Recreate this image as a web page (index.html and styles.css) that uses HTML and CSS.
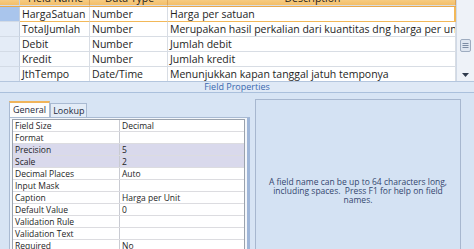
FILE: index.html
```html
<!DOCTYPE html>
<html lang="en">
<head>
  <meta charset="UTF-8" />
  <title>Table Design</title>
  <link rel="stylesheet" href="styles.css">
</head>
<body>

  <!-- Field grid -->
  <div class="design">
    <div class="fields">
      <div class="row head">
        <div class="sel"></div>
        <div class="cell c-name">Field Name</div>
        <div class="cell c-type">Data Type</div>
        <div class="cell c-desc">Description</div>
      </div>
      <div class="row current">
        <div class="sel"></div>
        <div class="cell c-name">HargaSatuan</div>
        <div class="cell c-type">Number</div>
        <div class="cell c-desc">Harga per satuan</div>
      </div>
      <div class="row">
        <div class="sel"></div>
        <div class="cell c-name">TotalJumlah</div>
        <div class="cell c-type">Number</div>
        <div class="cell c-desc">Merupakan hasil perkalian dari kuantitas dng harga per unit</div>
      </div>
      <div class="row">
        <div class="sel"></div>
        <div class="cell c-name">Debit</div>
        <div class="cell c-type">Number</div>
        <div class="cell c-desc">Jumlah debit</div>
      </div>
      <div class="row">
        <div class="sel"></div>
        <div class="cell c-name">Kredit</div>
        <div class="cell c-type">Number</div>
        <div class="cell c-desc">Jumlah kredit</div>
      </div>
      <div class="row">
        <div class="sel"></div>
        <div class="cell c-name">JthTempo</div>
        <div class="cell c-type">Date/Time</div>
        <div class="cell c-desc">Menunjukkan kapan tanggal jatuh temponya</div>
      </div>
    </div>
    <div class="vscroll">
      <div class="thumb">
        <svg width="9" height="7" viewBox="0 0 9 7"><path d="M1.5 1.5h6M1.5 3.5h6M1.5 5.5h6" stroke="#7d8ca3" stroke-width="1"/></svg>
      </div>
      <div class="arrow">
        <svg width="7" height="4" viewBox="0 0 7 4"><path d="M0 0h7L3.5 4z" fill="#2f3a4d"/></svg>
      </div>
    </div>
  </div>

  <div class="band">Field Properties</div>

  <!-- Field properties -->
  <div class="props">
    <div class="pane">
      <div class="tabs">
        <div class="tab active">General</div>
        <div class="tab">Lookup</div>
      </div>
      <div class="page">
        <div class="plist">
          <div class="prow"><span>Field Size</span><span>Decimal</span></div>
          <div class="prow"><span>Format</span><span></span></div>
          <div class="prow hl"><span>Precision</span><span>5</span></div>
          <div class="prow hl"><span>Scale</span><span>2</span></div>
          <div class="prow"><span>Decimal Places</span><span>Auto</span></div>
          <div class="prow"><span>Input Mask</span><span></span></div>
          <div class="prow"><span>Caption</span><span>Harga per Unit</span></div>
          <div class="prow"><span>Default Value</span><span>0</span></div>
          <div class="prow"><span>Validation Rule</span><span></span></div>
          <div class="prow"><span>Validation Text</span><span></span></div>
          <div class="prow"><span>Required</span><span>No</span></div>
        </div>
      </div>
    </div>
    <div class="help">
      A field name can be up to 64 characters long, including spaces.&nbsp; Press F1 for help on field names.
    </div>
  </div>

</body>
</html>
```

FILE: styles.css
```css
html, body {
  margin: 0;
  padding: 0;
  height: 100%;
  overflow: hidden;
  font-family: 'Open Sans', 'Noto Sans', sans-serif;
  color: #1e1e1e;
  background: #d7e4f4;
}

/* top grid */
.design {
  display: flex;
  height: 81px;
  background: #fff;
  overflow: hidden;
}

.fields {
  width: 456px;
  overflow: hidden;
}

.row {
  display: grid;
  grid-template-columns: 20px 70px 78px 1fr;
  height: 15px;
}

.row.head {
  margin-top: -9px;
  background: linear-gradient(#fbe2b0, #f3bc63);
  border-bottom: 1px solid #e9a84a;
}

.row.head .cell {
  text-align: center;
  border-right-color: #dba459;
}

.sel {
  background: #e4ecf7;
  border-right: 1px solid #c5d0df;
  border-bottom: 1px solid #d3dbe6;
}

.row.head .sel {
  background: transparent;
}

.row.current .sel {
  background: #a9c5ec;
}

.cell {
  font-size: 10.5px;
  line-height: 15px;
  padding-left: 2px;
  white-space: nowrap;
  overflow: hidden;
  border-right: 1px solid #d8dde4;
  border-bottom: 1px solid #d8dde4;
  box-sizing: border-box;
}

.row.current .cell {
  border-bottom: 1px solid #f2b859;
}

.row.current .c-desc {
  border-right: 2px solid #f2b859;
}

.vscroll {
  width: 18px;
  background: #eef2f8;
  border-left: 1px solid #d0d9e6;
  display: flex;
  flex-direction: column;
  align-items: center;
  padding-top: 39px;
  box-sizing: border-box;
}

.thumb {
  width: 11px;
  height: 13px;
  background: #dfe6f0;
  border: 1px solid #9eacc0;
  border-radius: 2px;
  box-sizing: border-box;
  display: flex;
  align-items: center;
  justify-content: center;
}

.arrow {
  margin-top: 19px;
  line-height: 0;
}

/* properties band */
.band {
  height: 10px;
  border-top: 1px solid #b4c6de;
  border-bottom: 1px solid #aac0dc;
  background: #dfe9f6;
  font-size: 9px;
  line-height: 10px;
  color: #3a68ae;
  text-align: center;
}

.props {
  display: flex;
  padding: 6px 13px 0 9px;
  gap: 5px;
}

.pane {
  width: 241px;
  padding-top: 2px;
}

.tabs {
  display: flex;
  align-items: flex-end;
  height: 16px;
}

.tab {
  font-size: 9px;
  line-height: 13px;
  padding: 0 2px;
  border: 1px solid #a9bad2;
  border-bottom: none;
  background: #e3ecf7;
  color: #1f2a3c;
}

.tab.active {
  height: 16px;
  line-height: 14px;
  padding: 0 3px;
  background: #fdfdfd;
  border-top: 2px solid #f0b45a;
  box-sizing: border-box;
}

.page {
  background: #f4f7fb;
  border: 1px solid #a9bad2;
  border-right: 3px solid #9fb6d8;
  padding: 1px 2px 0 2px;
  height: 140px;
}

.plist {
  background: #fff;
  border: 1px solid #9aa2ad;
}

.prow {
  display: grid;
  grid-template-columns: 107px 1fr;
  height: 12px;
  font-size: 8.5px;
  line-height: 12px;
  border-bottom: 1px solid #dcdce0;
  box-sizing: border-box;
}

.prow span {
  padding-left: 2px;
  white-space: nowrap;
  overflow: hidden;
}

.prow span:first-child {
  border-right: 1px solid #c9cbd2;
}

.prow.hl {
  background: #d9d9ec;
}

.help {
  flex: 1;
  height: 160px;
  background: #d4e2f3;
  border: 1px solid #a7b7cf;
  padding: 77px 3px 0;
  font-size: 8.5px;
  line-height: 9px;
  color: #34476f;
  text-align: center;
}
```
